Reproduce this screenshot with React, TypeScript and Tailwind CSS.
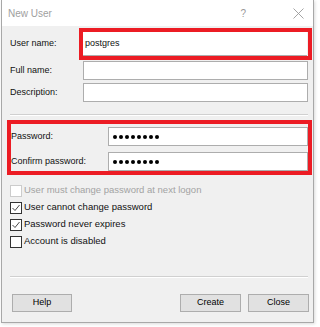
import React from "react";

const font = { fontFamily: '"Liberation Sans", Arial, sans-serif' };

function TextBox({ w, h = 19, children }: { w: number; h?: number; children?: React.ReactNode }) {
  return (
    <div
      className="bg-white border border-[#adadad] flex items-center pl-[2px] text-[9px] text-black"
      style={{ width: w, height: h }}
    >
      {children}
    </div>
  );
}

function Dots() {
  return (
    <div className="flex items-center gap-[2px] pl-[2px]">
      {Array.from({ length: 8 }).map((_, i) => (
        <span key={i} className="w-[4px] h-[4px] rounded-full bg-black" />
      ))}
    </div>
  );
}

function Check({ label, checked, disabled }: { label: string; checked?: boolean; disabled?: boolean }) {
  return (
    <div className="h-[17px] flex items-center pl-[8px]">
      <div
        className={
          "w-[12px] h-[12px] border bg-white flex items-center justify-center " +
          (disabled ? "border-[#cccccc]" : "border-[#333333]")
        }
      >
        {checked && (
          <svg width="10" height="10" viewBox="0 0 10 10">
            <polyline points="1.5,5 4,7.5 8.5,2" fill="none" stroke="#333" strokeWidth="0.9" />
          </svg>
        )}
      </div>
      <span className={"ml-[2px] text-[9.5px] " + (disabled ? "text-[#a3a3a3]" : "text-[#111]")}>{label}</span>
    </div>
  );
}

function Button({ label, w }: { label: string; w: number }) {
  return (
    <div
      className="h-[18px] bg-[#e1e1e1] border border-[#adadad] flex items-center justify-center text-[9px] text-black"
      style={{ width: w }}
    >
      {label}
    </div>
  );
}

export default function App() {
  return (
    <div className="w-[320px] h-[327px] bg-white" style={font}>
      <div className="ml-[1px] w-[313px] h-[323px] border border-t-0 border-[#a8a8a8] flex flex-col shadow-[1px_1px_3px_rgba(0,0,0,0.15)]">
        {/* title bar */}
        <div className="h-[26px] bg-white flex items-center shrink-0">
          <span className="ml-[6px] text-[10px] text-[#a0a0a0]">New User</span>
          <span className="ml-auto mr-[47px] text-[10px] text-[#999999]">?</span>
          <svg width="11" height="11" viewBox="0 0 11 11" className="mr-[9px]">
            <line x1="0.5" y1="0.5" x2="10.5" y2="10.5" stroke="#9a9a9a" strokeWidth="0.9" />
            <line x1="10.5" y1="0.5" x2="0.5" y2="10.5" stroke="#9a9a9a" strokeWidth="0.9" />
          </svg>
        </div>

        {/* body */}
        <div className="flex-1 bg-[#f0f0f0] flex flex-col text-[9px] text-[#111]">
          <div className="mt-[2px] h-[32px] flex items-center">
            <span className="w-[77px] pl-[8px]">User name:</span>
            <div className="w-[233px] h-[32px] border-[4px] border-[#ec1c24] pr-[1px]">
              <div className="h-full bg-white border-b border-[#adadad] flex items-center pl-[2px]">postgres</div>
            </div>
          </div>

          <div className="mt-[1px] flex items-center">
            <span className="w-[81px] pl-[8px]">Full name:</span>
            <TextBox w={225} />
          </div>

          <div className="mt-[3px] flex items-center">
            <span className="w-[81px] pl-[8px]">Description:</span>
            <TextBox w={225} />
          </div>

          <div className="mt-[12px] ml-[8px] w-[298px] border-t border-[#d0d0d0] border-b border-b-white" />

          <div className="mt-[4px] ml-[5px] w-[305px] border-[4px] border-[#ec1c24] pt-[3px] flex flex-col gap-[6px]">
            <div className="flex items-center">
              <span className="w-[97px]">Password:</span>
              <TextBox w={200}>
                <Dots />
              </TextBox>
            </div>
            <div className="flex items-center">
              <span className="w-[97px]">Confirm password:</span>
              <TextBox w={200}>
                <Dots />
              </TextBox>
            </div>
          </div>

          <div className="mt-[7px] flex flex-col">
            <Check label="User must change password at next logon" disabled />
            <Check label="User cannot change password" checked />
            <Check label="Password never expires" checked />
            <Check label="Account is disabled" />
          </div>

          <div className="mt-[26px] ml-[8px] w-[298px] border-t border-[#d0d0d0] border-b border-b-white" />

          <div className="mt-[16px] flex items-center">
            <div className="ml-[10px]">
              <Button label="Help" w={60} />
            </div>
            <div className="ml-auto flex gap-[7px] mr-[4px]">
              <Button label="Create" w={61} />
              <Button label="Close" w={61} />
            </div>
          </div>
        </div>
      </div>
    </div>
  );
}
